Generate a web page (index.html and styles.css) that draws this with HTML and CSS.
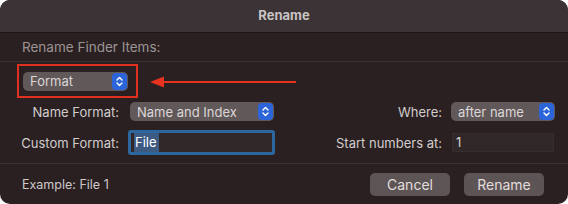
FILE: index.html
```html
<!DOCTYPE html>
<html>
<head>
    <meta charset="utf-8">
    <title>Rename</title>
    <link rel="stylesheet" href="styles.css">
</head>
<body>
    <div class="window">
        <div class="titlebar">Rename</div>
        <div class="heading">Rename Finder Items:</div>

        <div class="body">
            <div class="mode-row">
                <div class="highlight">
                    <div class="popup popup-mode">
                        <span>Format</span>
                        <span class="stepper">
                            <svg width="9" height="13" viewBox="0 0 9 13"><path d="M2 5 L4.5 2.5 L7 5 M2 8 L4.5 10.5 L7 8" fill="none" stroke="#fff" stroke-width="1.4" stroke-linecap="round" stroke-linejoin="round"/></svg>
                        </span>
                    </div>
                </div>
                <svg class="arrow" width="146" height="12" viewBox="0 0 146 12">
                    <path d="M0 6 L14 0.5 L14 11.5 Z" fill="#e6321f"/>
                    <rect x="12" y="5" width="134" height="2" fill="#e6321f"/>
                </svg>
            </div>

            <div class="grid">
                <div class="label">Name Format:</div>
                <div class="popup popup-name">
                    <span>Name and Index</span>
                    <span class="stepper">
                        <svg width="9" height="13" viewBox="0 0 9 13"><path d="M2 5 L4.5 2.5 L7 5 M2 8 L4.5 10.5 L7 8" fill="none" stroke="#fff" stroke-width="1.4" stroke-linecap="round" stroke-linejoin="round"/></svg>
                    </span>
                </div>
                <div class="label">Where:</div>
                <div class="popup popup-where">
                    <span>after name</span>
                    <span class="stepper">
                        <svg width="9" height="13" viewBox="0 0 9 13"><path d="M2 5 L4.5 2.5 L7 5 M2 8 L4.5 10.5 L7 8" fill="none" stroke="#fff" stroke-width="1.4" stroke-linecap="round" stroke-linejoin="round"/></svg>
                    </span>
                </div>

                <div class="label">Custom Format:</div>
                <div class="field field-focus"><span class="sel">File</span></div>
                <div class="label">Start numbers at:</div>
                <div class="field field-num">1</div>
            </div>
        </div>

        <div class="footer">
            <div class="example">Example: File 1</div>
            <div class="buttons">
                <div class="btn">Cancel</div>
                <div class="btn">Rename</div>
            </div>
        </div>
    </div>
</body>
</html>
```

FILE: styles.css
```css
html, body{
    margin: 0;
    padding: 0;
    background: #fff;
}
.window{
    width: 568px;
    height: 204px;
    border-radius: 10px;
    overflow: hidden;
    background: #2a2021;
    font-family: "Inter", "Noto Sans", sans-serif;
    font-size: 13px;
    color: #d9d4d4;
    display: flex;
    flex-direction: column;
}
.titlebar{
    height: 32px;
    line-height: 31px;
    text-align: center;
    font-weight: 700;
    color: #c9c4c4;
    background: #3b3335;
    border-bottom: 1px solid #1c1415;
}
.heading{
    height: 28px;
    line-height: 28px;
    padding-left: 22px;
    font-size: 13.5px;
    color: #9c9494;
    border-bottom: 1px solid #3a3032;
}
.body{
    height: 101px;
}
.mode-row{
    display: flex;
    align-items: center;
    padding: 2px 0 0 17px;
}
.highlight{
    width: 113px;
    height: 30px;
    border: 2px solid #e0301e;
    display: flex;
    align-items: center;
    padding-left: 4px;
}
.arrow{
    margin-left: 12px;
    margin-top: 1px;
}
.popup{
    height: 19px;
    border-radius: 5px;
    background: #615859;
    display: flex;
    align-items: center;
    justify-content: space-between;
    padding-left: 7px;
    padding-right: 1px;
    box-sizing: border-box;
    color: #dcd7d7;
}
.popup-mode{
    width: 105px;
}
.stepper{
    width: 15px;
    height: 17px;
    border-radius: 4px;
    background: #2b65d9;
    display: flex;
    align-items: center;
    justify-content: center;
}
.grid{
    display: grid;
    grid-template-columns: 120px 145px 1fr 104px;
    grid-template-rows: 19px 25px;
    column-gap: 9px;
    row-gap: 9px;
    align-items: center;
    margin-top: 4px;
    padding-right: 13px;
}
.label{
    text-align: right;
    color: #d2cdcd;
}
.grid .label:first-child,
.grid .label:nth-child(5){
    margin-right: 1px;
}
.popup-name{
    margin-left: 1px;
}
.field{
    height: 19px;
    background: #302728;
    box-sizing: border-box;
    line-height: 19px;
    padding-left: 2px;
}
.field-focus{
    height: 25px;
    margin-left: -1px;
    width: 147px;
    border: 3px solid #2d679f;
    border-radius: 3px;
    line-height: 19px;
    padding-left: 3px;
}
.sel{
    display: inline-block;
    background: #3d5a82;
    color: #fff;
    padding: 0 2px 0 1px;
    height: 19px;
}
.field-num{
    margin-left: 1px;
    width: 102px;
    border: 1px solid #362d2e;
    line-height: 17px;
    padding-left: 3px;
}
.footer{
    flex: 1;
    border-top: 1px solid #3a3032;
    display: flex;
    align-items: center;
    justify-content: space-between;
    padding: 0 24px 0 22px;
}
.example{
    font-size: 12.5px;
    color: #cfc9c9;
}
.buttons{
    display: flex;
    gap: 14px;
}
.btn{
    width: 80px;
    height: 23px;
    line-height: 23px;
    text-align: center;
    border-radius: 5px;
    background: #5d5455;
    color: #e2dddd;
    font-size: 14px;
}
```
